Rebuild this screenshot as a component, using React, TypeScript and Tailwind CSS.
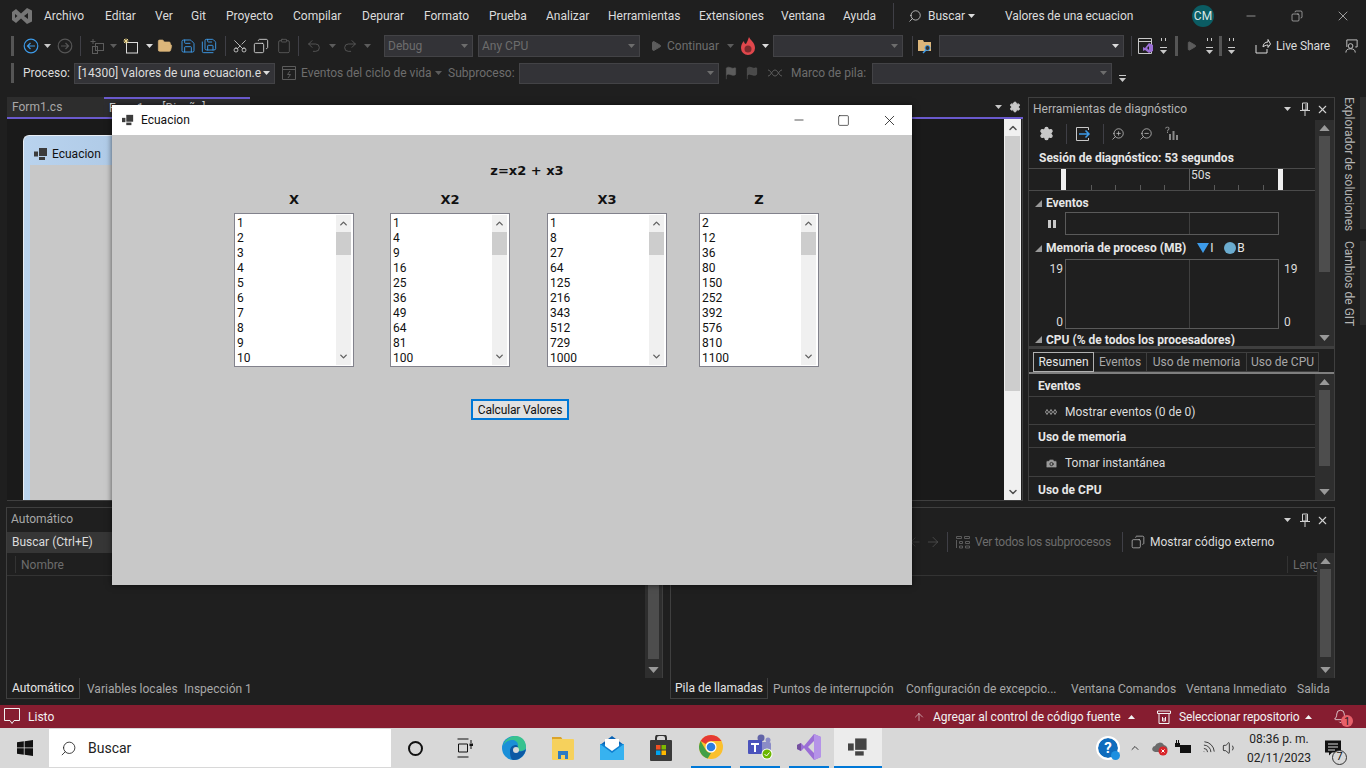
import React from "react";
import clsx from "clsx";
import {
  ArrowLeft,
  ArrowRight,
  ArrowUp,
  Bell,
  Camera,
  ChevronDown,
  ChevronUp,
  Clipboard,
  Copy,
  Flag,
  FolderOpen,
  Minus,
  Play,
  Redo2,
  Save,
  SaveAll,
  Scissors,
  Search,
  Settings,
  Square,
  Undo2,
  Volume1,
  Wifi,
  X,
  ZoomIn,
  ZoomOut,
} from "lucide-react";

const Caret = ({ className, up }: { className?: string; up?: boolean }) => (
  <svg width="7" height="4" viewBox="0 0 7 4" className={clsx("shrink-0 fill-current", className)}>
    <path d={up ? "M0 4 3.5 0 7 4Z" : "M0 0h7L3.5 4Z"} />
  </svg>
);

const Grip = ({ className }: { className?: string }) => (
  <div className={clsx("h-[20px] w-[3px] shrink-0 bg-[radial-gradient(#555_1px,transparent_1px)] bg-[length:2px_2px]", className)} />
);

const Sep = ({ className }: { className?: string }) => (
  <div className={clsx("h-[20px] w-px shrink-0 bg-[#3f3f46]", className)} />
);

const StepMark = ({ className }: { className?: string }) => (
  <svg width="8" height="18" viewBox="0 0 8 18" className={clsx("shrink-0", className)} fill="#c8c8c8">
    <rect x="1" y="1" width="1" height="3" />
    <rect x="5" y="1" width="1" height="3" />
    <rect x="0" y="10" width="7" height="1" />
    <path d="M0 13h7l-3.5 4Z" />
  </svg>
);

const Combo = ({ className, text, disabled }: { className: string; text?: string; disabled?: boolean }) => (
  <div
    className={clsx(
      "flex shrink-0 items-center justify-between border border-[#434346] bg-[#333337] pl-[3px] pr-[4px]",
      disabled ? "text-[#6d6d6d]" : "text-[#dcdcdc]",
      className,
    )}
  >
    <span>{text}</span>
    <Caret className={disabled ? "text-[#6d6d6d]" : "text-[#dcdcdc]"} />
  </div>
);

const AppGlyph = ({ className, fill = "#3c3c3c" }: { className?: string; fill?: string }) => (
  <svg viewBox="0 0 14 12" className={className} fill={fill}>
    <rect x="5" y="0" width="8" height="8" />
    <rect x="0" y="3.5" width="4" height="5" />
    <rect x="5" y="9" width="6" height="3" />
  </svg>
);

const VsLogo = ({ className }: { className?: string }) => (
  <svg viewBox="0 0 20 20" className={className} fill="#767676" fillRule="evenodd">
    <path d="M0 6 4 3l5 4.500L15 2l5 2.500v11L15 18l-6-5.500L4 17l-4-3ZM3 8v4l2.500-2ZM12 10l4 3V7Z" />
  </svg>
);

const menu = [
  ["Archivo", "w-[61px]"],
  ["Editar", "w-[50px]"],
  ["Ver", "w-[36px]"],
  ["Git", "w-[35px]"],
  ["Proyecto", "w-[67px]"],
  ["Compilar", "w-[69px]"],
  ["Depurar", "w-[62px]"],
  ["Formato", "w-[65px]"],
  ["Prueba", "w-[57px]"],
  ["Analizar", "w-[62px]"],
  ["Herramientas", "w-[91px]"],
  ["Extensiones", "w-[82px]"],
  ["Ventana", "w-[62px]"],
  ["Ayuda", "w-[50px]"],
];

const TitleBar = () => (
  <div className="flex h-[32px] items-center text-[#dcdcdc]">
    <VsLogo className="ml-[12px] mr-[12px] h-[20px] w-[20px] shrink-0" />
    {menu.map(([label, width]) => (
      <span key={label} className={clsx("shrink-0", width)}>
        {label}
      </span>
    ))}
    <div className="h-[26px] w-px shrink-0 bg-[#3f3f46]" />
    <Search className="ml-[14px] h-[14px] w-[14px] shrink-0 -scale-x-100" strokeWidth={1.3} />
    <span className="ml-[6px] w-[36px] shrink-0">Buscar</span>
    <Caret className="ml-[4px] mr-[30px]" />
    <span className="w-[187px] shrink-0 tracking-[-0.1px]">Valores de una ecuacion</span>
    <div className="flex h-[22px] w-[22px] shrink-0 items-center justify-center rounded-full bg-[#0b5c63] text-[12px] text-[#d8e6e6]">
      CM
    </div>
    <div className="ml-[14px] flex w-[46px] shrink-0 justify-center">
      <Minus className="h-[14px] w-[14px]" strokeWidth={1} />
    </div>
    <div className="flex w-[46px] shrink-0 justify-center">
      <Copy className="h-[12px] w-[12px] -scale-x-100" strokeWidth={1.2} />
    </div>
    <div className="flex w-[46px] shrink-0 justify-center">
      <X className="h-[16px] w-[16px]" strokeWidth={1} />
    </div>
  </div>
);

const ToolbarMain = () => (
  <div className="flex h-[28px] items-center">
    <Grip className="ml-[11px]" />
    <svg viewBox="0 0 16 16" className="ml-[9px] h-[16px] w-[16px] shrink-0" fill="none" stroke="#3d9be9" strokeWidth="1.2">
      <circle cx="8" cy="8" r="6.800" />
      <path d="M12 8H4.500M7.500 5 4.500 8l3 3" />
    </svg>
    <Caret className="ml-[5px] text-[#c8c8c8]" />
    <svg viewBox="0 0 16 16" className="ml-[6px] h-[16px] w-[16px] shrink-0" fill="none" stroke="#555" strokeWidth="1.2">
      <circle cx="8" cy="8" r="6.800" />
      <path d="M4 8h7.500M8.500 5l3 3-3 3" />
    </svg>
    <Sep className="ml-[7px]" />
    <svg viewBox="0 0 16 16" className="ml-[8px] h-[16px] w-[16px] shrink-0" fill="none" stroke="#5c5c5c">
      <rect x="6.500" y="5.500" width="8" height="7" />
      <rect x="3.500" y="8.500" width="5" height="7" />
      <path d="M4 1v5M1.500 3.500h5" />
    </svg>
    <Caret className="ml-[5px] text-[#5c5c5c]" />
    <svg viewBox="0 0 16 16" className="ml-[6px] h-[16px] w-[16px] shrink-0" fill="none" stroke="#dcdcdc">
      <rect x="3.500" y="4.500" width="11" height="10.500" />
      <path d="M3 .5v5M.5 3h5M1 1l4 4M5 1 1 5" stroke="#e8d28a" />
    </svg>
    <Caret className="ml-[7px] text-[#dcdcdc]" />
    <FolderOpen className="ml-[4px] h-[16px] w-[16px] shrink-0 fill-[#dcb67a] text-[#dcb67a]" strokeWidth={1} />
    <Save className="ml-[7px] h-[16px] w-[16px] shrink-0 text-[#3d9be9]" strokeWidth={1.4} />
    <SaveAll className="ml-[5px] h-[16px] w-[16px] shrink-0 text-[#3d9be9]" strokeWidth={1.4} />
    <Sep className="ml-[8px]" />
    <Scissors className="ml-[6px] h-[16px] w-[16px] shrink-0 -rotate-90 text-[#dcdcdc]" strokeWidth={1.2} />
    <Copy className="ml-[5px] h-[16px] w-[16px] shrink-0 -scale-x-100 text-[#dcdcdc]" strokeWidth={1.3} />
    <Clipboard className="ml-[7px] h-[16px] w-[16px] shrink-0 text-[#5c5c5c]" strokeWidth={1.3} />
    <Sep className="ml-[6px]" />
    <Undo2 className="ml-[7px] h-[16px] w-[16px] shrink-0 text-[#5c5c5c]" strokeWidth={1.3} />
    <Caret className="ml-[7px] text-[#5c5c5c]" />
    <Redo2 className="ml-[6px] h-[16px] w-[16px] shrink-0 text-[#5c5c5c]" strokeWidth={1.3} />
    <Caret className="ml-[6px] text-[#5c5c5c]" />
    <Combo className="ml-[13px] h-[22px] w-[89px]" text="Debug" disabled />
    <Combo className="ml-[5px] h-[22px] w-[162px]" text="Any CPU" disabled />
    <Play className="ml-[10px] h-[14px] w-[12px] shrink-0 fill-[#5c5c5c] text-[#5c5c5c]" />
    <span className="ml-[5px] w-[55px] shrink-0 text-[#6d6d6d]">Continuar</span>
    <Caret className="ml-[5px] text-[#5c5c5c]" />
    <svg viewBox="0 0 16 18" className="ml-[6px] h-[18px] w-[16px] shrink-0">
      <path d="M9 0c1 3 6 5 6 11a7 7 0 0 1-14 0c0-3 1-5 3-7 0 2 1 3 2 3 1-2 2-4 3-7Z" fill="#e0474c" />
      <circle cx="8" cy="12" r="3.500" fill="#7d2a2d" />
    </svg>
    <Caret className="ml-[6px] text-[#dcdcdc]" />
    <Combo className="ml-[4px] h-[22px] w-[130px]" disabled />
    <Sep className="ml-[9px]" />
    <svg viewBox="0 0 16 16" className="ml-[4px] h-[16px] w-[16px] shrink-0">
      <path d="M1 2h5l1 2h7v9H1Z" fill="#dcb67a" />
      <circle cx="10.500" cy="10" r="2.500" fill="#333" stroke="#3d9be9" />
      <path d="M9 12l-3 3" stroke="#3d9be9" strokeWidth="1.500" />
    </svg>
    <Combo className="ml-[6px] h-[22px] w-[185px]" />
    <Sep className="ml-[7px]" />
    <svg viewBox="0 0 16 16" className="ml-[6px] h-[16px] w-[16px] shrink-0" fill="none">
      <path d="M.5.5h13v15H.5ZM.5 3.500h13" stroke="#c8c8c8" />
      <path d="M11 5 15 7v6l-4 2-4-3-2 1V9l2 1ZM11 8l-2 2 2 2Z" fill="#9b6fd6" fillRule="evenodd" />
    </svg>
    <StepMark className="ml-[6px]" />
    <Grip className="ml-[7px]" />
    <Play className="ml-[8px] h-[14px] w-[11px] shrink-0 fill-[#5c5c5c] text-[#5c5c5c]" />
    <StepMark className="ml-[9px]" />
    <Grip className="ml-[5px]" />
    <StepMark className="ml-[6px]" />
    <svg viewBox="0 0 16 16" className="ml-[19px] h-[16px] w-[16px] shrink-0" fill="none" stroke="#dcdcdc">
      <path d="M1 7v8h11v-4M8 9c0-3 2-5 5-5V1.500L15.500 6 13 9.500V7c-2 0-4 1-5 2Z" />
    </svg>
    <span className="ml-[5px] w-[54px] shrink-0 tracking-[-0.1px] text-[#dcdcdc]">Live Share</span>
    <svg viewBox="0 0 16 16" className="ml-[14px] h-[16px] w-[15px] shrink-0" fill="none" stroke="#c8c8c8">
      <path d="M3 9V1.500h11V9h-2" />
      <circle cx="7" cy="8" r="2.500" />
      <path d="M2 15c0-3 2-4 5-4s5 1 5 4" />
    </svg>
  </div>
);

const ToolbarProcess = () => (
  <div className="flex h-[26px] items-center">
    <Grip className="ml-[11px]" />
    <span className="ml-[9px] w-[51px] shrink-0 text-[#dcdcdc]">Proceso:</span>
    <Combo className="h-[21px] w-[201px]" text="[14300] Valores de una ecuacion.e" />
    <svg viewBox="0 0 14 14" className="ml-[7px] h-[14px] w-[14px] shrink-0" fill="none" stroke="#5c5c5c">
      <path d="M.5.5h13v13H.5ZM.5 3.500h13M8 5 5.500 8.500h3L6 12" />
    </svg>
    <span className="ml-[5px] w-[130px] shrink-0 text-[#6d6d6d]">Eventos del ciclo de vida</span>
    <Caret className="ml-[4px] text-[#5c5c5c]" />
    <span className="ml-[6px] w-[65px] shrink-0 text-[#6d6d6d]">Subproceso:</span>
    <Combo className="ml-[6px] h-[21px] w-[200px]" disabled />
    <Flag className="ml-[5px] h-[14px] w-[14px] shrink-0 fill-[#5c5c5c] text-[#5c5c5c]" strokeWidth={1} />
    <Flag className="ml-[7px] h-[14px] w-[14px] shrink-0 fill-[#4a4a4a] text-[#5c5c5c]" strokeWidth={1} />
    <svg viewBox="0 0 14 14" className="ml-[9px] h-[14px] w-[14px] shrink-0" fill="none" stroke="#5c5c5c">
      <path d="M0 4c3 0 4 6 7 6s4-6 7-6M0 10c3 0 4-6 7-6s4 6 7 6" />
    </svg>
    <span className="ml-[9px] w-[75px] shrink-0 text-[#6d6d6d]">Marco de pila:</span>
    <Combo className="ml-[6px] h-[21px] w-[240px]" disabled />
    <div className="ml-[6px] mt-[10px] flex w-[8px] shrink-0 flex-col items-center gap-[2px] text-[#c8c8c8]">
      <div className="h-px w-[7px] bg-current" />
      <Caret />
    </div>
  </div>
);

const LightScrollbar = () => (
  <div className="flex w-[17px] shrink-0 flex-col bg-[#f0f0f0] text-[#505050]">
    <div className="flex h-[17px] items-center justify-center">
      <ChevronUp className="h-[12px] w-[12px]" strokeWidth={3} />
    </div>
    <div className="mx-px h-[255px] bg-[#cdcdcd]" />
    <div className="flex-1" />
    <div className="flex h-[17px] items-center justify-center">
      <ChevronDown className="h-[12px] w-[12px]" strokeWidth={3} />
    </div>
  </div>
);

const DarkScrollbar = ({ className, thumb }: { className: string; thumb: string }) => (
  <div className={clsx("flex shrink-0 flex-col items-center bg-[#2e2e2e] text-[#999]", className)}>
    <div className="flex h-[16px] items-center">
      <Caret up className="scale-150" />
    </div>
    <div className={clsx("w-[11px] bg-[#4d4d4d]", thumb)} />
    <div className="flex-1" />
    <div className="flex h-[16px] items-center">
      <Caret className="scale-150" />
    </div>
  </div>
);

const PanelButtons = () => (
  <div className="flex items-center text-[#d0d0d0]">
    <Caret />
    <svg viewBox="0 0 10 14" className="ml-[9px] h-[14px] w-[10px]" fill="none" stroke="currentColor">
      <path d="M2.500 1h5v7h-5ZM0 8.500h10M5 9v5M6 2v6" />
    </svg>
    <X className="ml-[6px] h-[13px] w-[13px]" strokeWidth={2} />
  </div>
);

const DocumentWell = () => (
  <div className="ml-[7px] flex h-[404px] w-[1016px] shrink-0 flex-col">
    <div className="flex h-[20px] items-stretch">
      <div className="flex w-[97px] items-center bg-[#2d2d2d] pl-[5px] text-[#a8a8a8]">Form1.cs</div>
      <div className="flex w-[146px] items-center border-t-2 border-[#6a5acd] bg-[#2d2d30] pl-[5px] text-[#dcdcdc]">
        Form1.cs [Diseño]
      </div>
      <div className="flex flex-1 items-center justify-end gap-[7px] pr-[2px] text-[#c8c8c8]">
        <Caret />
        <Settings className="h-[12px] w-[12px] fill-current" />
      </div>
    </div>
    <div className="h-[2px] bg-[#6a5acd]" />
    <div className="flex min-h-0 flex-1 border-b border-r border-[#3f3f3f]">
      <div className="min-w-0 flex-1 overflow-hidden bg-[#1a1a1a] pl-[16px] pt-[16px]">
        <div className="h-[400px] w-[400px] rounded-tl-[6px] border-l border-t border-[#e8eef5] bg-[linear-gradient(90deg,#b9d3ee,#8fadcf)]">
          <div className="flex h-[29px] items-center pl-[10px] pt-[6px] text-[#111]">
            <AppGlyph className="mr-[4px] h-[12px] w-[14px]" />
            Ecuacion
          </div>
          <div className="ml-[6px] h-full bg-[#c8c8c8]" />
        </div>
      </div>
      <LightScrollbar />
      <div className="w-px" />
    </div>
  </div>
);

const SectionHead = ({ children, className }: { children: React.ReactNode; className?: string }) => (
  <div className={clsx("flex items-center font-bold text-[#e6e6e6]", className)}>
    <svg width="7" height="7" viewBox="0 0 7 7" className="ml-[6px] mr-[4px] shrink-0 fill-[#999]">
      <path d="M7 0v7H0Z" />
    </svg>
    {children}
  </div>
);

const ChartBox = ({ className }: { className: string }) => (
  <div className={clsx("w-[214px] shrink-0 border border-[#5a5a5a]", className)}>
    <div className="h-full w-[124px] border-r border-[#3f3f3f]" />
  </div>
);

const SummaryRow = ({ icon, label, className }: { icon: React.ReactNode; label: string; className: string }) => (
  <div className={clsx("flex items-center border-b border-[#3f3f3f] pt-[2px] text-[#dcdcdc]", className)}>
    <div className="ml-[15px] mr-[7px] flex w-[14px] justify-center">{icon}</div>
    {label}
  </div>
);

const SummaryHead = ({ label, last }: { label: string; last?: boolean }) => (
  <div className={clsx("flex h-[23px] items-center pl-[9px] pt-[2px] font-bold text-[#e6e6e6]", !last && "border-b border-[#3f3f3f]")}>
    {label}
  </div>
);

const DiagnosticsPanel = () => (
  <div className="ml-[5px] flex h-[404px] w-[307px] shrink-0 flex-col border border-[#3f3f3f]">
    <div className="flex h-[22px] shrink-0 items-center justify-between pl-[4px] pr-[5px] text-[#b4b4b4]">
      Herramientas de diagnóstico
      <PanelButtons />
    </div>
    <div className="flex h-[226px] shrink-0">
      <div className="w-[286px] shrink-0">
        <div className="flex h-[27px] items-center text-[#c8c8c8]">
          <Settings className="ml-[10px] h-[15px] w-[15px] fill-[#c8c8c8]" />
          <Sep className="ml-[12px]" />
          <svg viewBox="0 0 16 16" className="ml-[8px] h-[16px] w-[16px]" fill="none" stroke="#c8c8c8">
            <path d="M13.500 4V1.500h-12v13h12V12" />
            <path d="M4 8h10M10.500 4.500 14 8l-3.500 3.500" stroke="#3d9be9" strokeWidth="1.500" />
          </svg>
          <Sep className="ml-[12px]" />
          <ZoomIn className="ml-[7px] h-[14px] w-[14px] -scale-x-100" strokeWidth={1.3} />
          <ZoomOut className="ml-[14px] h-[14px] w-[14px] -scale-x-100" strokeWidth={1.3} />
          <svg viewBox="0 0 14 16" className="ml-[12px] h-[16px] w-[14px]" fill="#8a8a8a">
            <rect x="4" y="8" width="2" height="6" />
            <rect x="7.500" y="5" width="2" height="9" />
            <rect x="11" y="9" width="2" height="5" />
            <path d="M0 2.500C.5 0 4.500 0 4.500 2.500 4.500 4 3 4 3 5.500H2C2 3.500 3.500 3.500 3.500 2.500 3.500 1.200 1.500 1.200 1 2.500ZM2 6h1v1H2Z" />
          </svg>
        </div>
        <div className="flex h-[21px] items-center pl-[10px] font-bold text-[#e6e6e6]">
          Sesión de diagnóstico: 53 segundos
        </div>
        <div className="flex h-[23px] items-start border-y border-[#4a4a4a]">
          <svg width="286" height="21" viewBox="0 0 286 21" className="shrink-0">
            <rect x="32" y="0" width="5" height="21" fill="#f0f0f0" />
            <rect x="249" y="0" width="5" height="21" fill="#f0f0f0" />
            <rect x="160" y="0" width="1" height="21" fill="#5a5a5a" />
            {[62, 86, 111, 135, 185, 209, 234].map((x) => (
              <rect key={x} x={x} y="16" width="1" height="5" fill="#5a5a5a" />
            ))}
            <text x="162" y="10" fill="#dcdcdc" fontSize="12">
              50s
            </text>
          </svg>
        </div>
        <SectionHead className="h-[21px] pt-[3px]">Eventos</SectionHead>
        <div className="flex h-[23px] items-center">
          <div className="ml-[19px] flex gap-[2px]">
            <div className="h-[8px] w-[3px] bg-[#c8c8c8]" />
            <div className="h-[8px] w-[3px] bg-[#c8c8c8]" />
          </div>
          <ChartBox className="ml-[9px] h-[23px]" />
        </div>
        <SectionHead className="h-[24px] pt-[2px]">
          Memoria de proceso (MB)
          <svg width="12" height="10" viewBox="0 0 12 10" className="ml-[11px] fill-[#3d9be9]">
            <path d="M0 0h12L6 10Z" />
          </svg>
          <span className="ml-px w-[6px] font-normal">I</span>
          <div className="ml-[8px] h-[12px] w-[12px] rounded-full bg-[#6baccf]" />
          <span className="ml-px w-[7px] font-normal">B</span>
        </SectionHead>
        <div className="flex h-[70px] text-[#dcdcdc]">
          <div className="-mb-[2px] flex w-[36px] shrink-0 flex-col items-end justify-between pr-[2px] pt-px">
            <span>19</span>
            <span>0</span>
          </div>
          <ChartBox className="h-[70px]" />
          <div className="-mb-[2px] flex flex-col justify-between pl-[5px] pt-px">
            <span>19</span>
            <span>0</span>
          </div>
        </div>
        <SectionHead className="h-[17px] pt-[4px]">CPU (% de todos los procesadores)</SectionHead>
      </div>
      <DarkScrollbar className="w-[19px]" thumb="h-[136px]" />
    </div>
    <div className="h-[3px] shrink-0 bg-[#3f3f3f]" />
    <div className="flex h-[23px] shrink-0 items-end pl-[4px] text-[#a8a8a8]">
      <div className="flex h-[20px] w-[61px] items-center justify-center border border-[#b0b0b0] text-[#e6e6e6]">Resumen</div>
      <div className="flex h-[20px] w-[53px] items-center justify-center border-y border-r border-[#3f3f3f]">Eventos</div>
      <div className="flex h-[20px] w-[100px] items-center justify-center border-y border-r border-[#3f3f3f]">Uso de memoria</div>
      <div className="flex h-[20px] w-[72px] items-center justify-center border-y border-r border-[#3f3f3f]">Uso de CPU</div>
    </div>
    <div className="h-[2px] shrink-0 bg-[#7f7f7f]" />
    <div className="flex min-h-0 flex-1">
      <div className="w-[286px] shrink-0">
        <SummaryHead label="Eventos" />
        <SummaryRow
          className="h-[28px]"
          label="Mostrar eventos (0 de 0)"
          icon={
            <svg viewBox="0 0 12 6" className="h-[6px] w-[12px]" fill="none" stroke="#9a9a9a">
              <path d="M2 .5 .5 3 2 5.500 3.500 3ZM6 .5 4.500 3 6 5.500 7.500 3ZM10 .5 8.500 3 10 5.500 11.500 3Z" />
            </svg>
          }
        />
        <SummaryHead label="Uso de memoria" />
        <SummaryRow
          className="h-[29px]"
          label="Tomar instantánea"
          icon={<Camera className="h-[13px] w-[13px] fill-[#9a9a9a] text-[#1f1f1f]" strokeWidth={1.5} />}
        />
        <SummaryHead label="Uso de CPU" last />
      </div>
      <DarkScrollbar className="w-[19px]" thumb="h-[76px]" />
    </div>
  </div>
);

const BottomTab = ({ label, className }: { label: string; className?: string }) => (
  <span className={clsx("shrink-0 text-[#a8a8a8]", className)}>{label}</span>
);

const AutosPanel = () => (
  <div className="ml-[6px] flex h-[192px] w-[657px] shrink-0 flex-col">
    <div className="flex min-h-0 flex-1 flex-col border-x border-t border-[#3f3f3f]">
      <div className="flex h-[24px] shrink-0 items-center pb-[2px] pl-[4px] text-[#a8a8a8]">Automático</div>
      <div className="flex h-[21px] shrink-0 items-center bg-[#363636] pb-[2px] pl-[5px] text-[#dcdcdc]">Buscar (Ctrl+E)</div>
      <div className="flex min-h-0 flex-1">
        <div className="flex-1">
          <div className="mt-[3px] flex h-[20px] items-center border-b border-[#333] pb-[2px] text-[#6d6d6d]">
            <div className="ml-[8px] h-full w-px bg-[#333]" />
            <span className="ml-[5px]">Nombre</span>
          </div>
        </div>
        <DarkScrollbar className="w-[17px]" thumb="h-[90px]" />
      </div>
    </div>
    <div className="flex h-[21px] shrink-0 items-center">
      <div className="flex h-[21px] w-[74px] items-center justify-center border border-t-0 border-[#3f3f3f] text-[#e6e6e6]">Automático</div>
      <BottomTab label="Variables locales" className="ml-[7px] w-[97px]" />
      <BottomTab label="Inspección 1" />
    </div>
  </div>
);

const StackPanel = () => (
  <div className="ml-[7px] flex h-[192px] w-[665px] shrink-0 flex-col">
    <div className="flex min-h-0 flex-1 flex-col border-x border-t border-[#3f3f3f]">
      <div className="flex h-[24px] shrink-0 items-center justify-end pr-[5px]">
        <PanelButtons />
      </div>
      <div className="flex h-[21px] shrink-0 items-center justify-end pb-px text-[#6d6d6d]">
        <ArrowLeft className="h-[14px] w-[14px] text-[#4a4a4a]" strokeWidth={1} />
        <ArrowRight className="ml-[3px] h-[16px] w-[16px] text-[#5c5c5c]" strokeWidth={1} />
        <Sep className="ml-[6px]" />
        <svg viewBox="0 0 14 14" className="ml-[8px] h-[14px] w-[14px]" fill="none" stroke="#5c5c5c">
          <path d="M.5 1.500h5v2h-5ZM8.500 1.500h5v2h-5ZM3.500 6.500h3v2h-3ZM9.500 6.500h4v2h-4ZM3.500 11h3v2h-3ZM9.500 11h4v2h-4ZM.5 5v8" />
        </svg>
        <span className="ml-[5px] w-[147px] tracking-[-0.25px]">Ver todos los subprocesos</span>
        <Sep />
        <Copy className="ml-[8px] h-[14px] w-[14px] -scale-x-100 text-[#c8c8c8]" strokeWidth={1.2} />
        <span className="ml-[5px] w-[184px] text-[#dcdcdc]">Mostrar código externo</span>
      </div>
      <div className="flex min-h-0 flex-1">
        <div className="flex-1">
          <div className="mt-[3px] flex h-[20px] items-center justify-end border-b border-[#333] pb-[2px] text-[#6d6d6d]">
            <div className="h-full w-px bg-[#333]" />
            <span className="ml-[5px] w-[24px]">Leng</span>
          </div>
        </div>
        <DarkScrollbar className="w-[17px]" thumb="h-[88px]" />
      </div>
    </div>
    <div className="flex h-[21px] shrink-0 items-center">
      <div className="flex h-[21px] w-[98px] items-center justify-center border border-t-0 border-[#3f3f3f] text-[#e6e6e6]">Pila de llamadas</div>
      <BottomTab label="Puntos de interrupción" className="ml-[5px] w-[133px]" />
      <BottomTab label="Configuración de excepcio..." className="w-[165px]" />
      <BottomTab label="Ventana Comandos" className="w-[115px]" />
      <BottomTab label="Ventana Inmediato" className="w-[111px]" />
      <BottomTab label="Salida" />
    </div>
  </div>
);

const SideTabs = () => (
  <div className="flex w-[26px] shrink-0 flex-col pt-[11px] text-[#b4b4b4]">
    <div className="flex h-[132px] justify-between">
      <span className="[writing-mode:vertical-rl]">Explorador de soluciones</span>
      <div className="w-[6px] bg-[#2d2d2d]" />
    </div>
    <div className="mt-[12px] flex h-[84px] justify-between">
      <span className="[writing-mode:vertical-rl]">Cambios de GIT</span>
      <div className="w-[6px] bg-[#2d2d2d]" />
    </div>
  </div>
);

const ListBox = ({ items }: { items: number[] }) => (
  <div className="flex h-[154px] w-[120px] shrink-0 border border-[#82828c] bg-white p-px">
    <div className="flex-1 pl-px pt-px text-[#111]">
      {items.map((n, i) => (
        <div key={i} className="h-[15px] leading-[15px]">
          {n}
        </div>
      ))}
    </div>
    <div className="mr-px flex w-[15px] flex-col bg-[#f0f0f0] text-[#606060]">
      <div className="flex h-[17px] items-center justify-center">
        <ChevronUp className="h-[11px] w-[11px]" strokeWidth={3} />
      </div>
      <div className="h-[23px] bg-[#cdcdcd]" />
      <div className="flex-1" />
      <div className="flex h-[17px] items-center justify-center">
        <ChevronDown className="h-[11px] w-[11px]" strokeWidth={3} />
      </div>
    </div>
  </div>
);

const columns = [
  { title: "X", items: [1, 2, 3, 4, 5, 6, 7, 8, 9, 10], cls: "" },
  { title: "X2", items: [1, 4, 9, 16, 25, 36, 49, 64, 81, 100], cls: "ml-[36px]" },
  { title: "X3", items: [1, 8, 27, 64, 125, 216, 343, 512, 729, 1000], cls: "ml-[37px]" },
  { title: "Z", items: [2, 12, 36, 80, 150, 252, 392, 576, 810, 1100], cls: "ml-[32px]" },
];

const EcuacionWindow = () => (
  <div className="absolute left-[112px] top-[105px] flex h-[480px] w-[800px] flex-col bg-[#c8c8c8] shadow-[0_0_6px_rgba(0,0,0,0.6)]">
    <div className="flex h-[30px] shrink-0 items-center bg-white text-[#111]">
      <AppGlyph className="ml-[10px] mr-[7px] h-[12px] w-[12px]" />
      Ecuacion
      <div className="ml-auto flex items-center">
        <div className="flex w-[45px] justify-center">
          <Minus className="h-[14px] w-[14px]" strokeWidth={1.2} />
        </div>
        <div className="flex w-[45px] justify-center">
          <Square className="h-[13px] w-[13px]" strokeWidth={1.2} />
        </div>
        <div className="flex w-[46px] justify-center">
          <X className="h-[17px] w-[17px]" strokeWidth={1.1} />
        </div>
      </div>
    </div>
    <div className="flex h-[49px] shrink-0 items-end justify-center pb-[4px] pl-[30px] text-[13px] font-bold text-[#111] [font-family:'DejaVu_Sans',sans-serif]">
      z=x2 + x3
    </div>
    <div className="flex shrink-0 pl-[122px]">
      {columns.map((col) => (
        <div key={col.title} className={col.cls}>
          <div className="flex h-[29px] items-center justify-center pt-[3px] text-[13px] font-bold text-[#111] [font-family:'DejaVu_Sans',sans-serif]">
            {col.title}
          </div>
          <ListBox items={col.items} />
        </div>
      ))}
    </div>
    <div className="mt-[32px] flex pl-[359px]">
      <div className="flex h-[21px] w-[98px] items-center justify-center border-2 border-[#0078d7] bg-[#e1e1e1] tracking-[-0.15px] text-[#111]">
        Calcular Valores
      </div>
    </div>
  </div>
);

const StatusBar = () => (
  <div className="flex h-[23px] shrink-0 items-center bg-[#861d30] text-[#f2f2f2]">
    <svg viewBox="0 0 16 17" className="ml-[4px] h-[17px] w-[16px] shrink-0" fill="none" stroke="#f2f2f2">
      <path d="M.5.5h15v12H10l-2 3-2-3H.5Z" />
    </svg>
    <span className="ml-[8px] w-[40px] shrink-0">Listo</span>
    <ArrowUp className="ml-[845px] h-[14px] w-[12px] shrink-0" strokeWidth={1.2} />
    <span className="ml-[8px] w-[189px] shrink-0">Agregar al control de código fuente</span>
    <Caret up className="ml-[6px]" />
    <svg viewBox="0 0 14 14" className="ml-[22px] h-[14px] w-[14px] shrink-0" fill="none" stroke="#f2f2f2">
      <path d="M.5 1h13v2.500H.5ZM2 3.500v10h10v-10M5.500 7v4h3V7M5.500 9h3" />
    </svg>
    <span className="ml-[8px] w-[120px] shrink-0 tracking-[-0.1px]">Seleccionar repositorio</span>
    <Caret up className="ml-[6px]" />
    <div className="relative ml-[21px] shrink-0">
      <Bell className="h-[15px] w-[15px]" strokeWidth={1.2} />
      <div className="absolute -bottom-[3px] -right-[5px] flex h-[12px] w-[12px] items-center justify-center rounded-full bg-[#e8606a] text-[10px] text-[#1a1a1a]">
        1
      </div>
    </div>
  </div>
);

const Edge = () => (
  <svg viewBox="0 0 24 24" className="h-[24px] w-[24px]">
    <circle cx="12" cy="12" r="12" fill="#1b8fd8" />
    <path d="M1 10C3 2 10 0 14 0c6 0 10 5 10 11 0 3-3 4-6 4-3 0-4-1-4-2 0-2 2-2 2-4 0-3-3-5-6-5-4 0-8 3-9 6Z" fill="#37c28f" />
    <path d="M8 15c0-4 3-6 6-6 1 0 2 1 2 2-2 1-2 3 0 4 3 1 6 0 8-2-1 6-6 11-12 11-2 0-4-1-4-9Z" fill="#0c59a4" />
    <circle cx="14" cy="14" r="3" fill="#d8d8d8" />
  </svg>
);

const Explorer = () => (
  <svg viewBox="0 0 22 24" className="h-[24px] w-[22px]">
    <path d="M0 1h9l2 3H0Z" fill="#dba32a" />
    <rect y="3" width="22" height="21" rx="1" fill="#f6d15c" />
    <path d="M6 23v-8h10v8h-3v-4H9v4Z" fill="#2b7bc4" />
  </svg>
);

const Mail = () => (
  <svg viewBox="0 0 24 24" className="h-[24px] w-[24px]">
    <path d="M12 0 24 9H0Z" fill="#0a63b5" />
    <rect y="8" width="24" height="16" fill="#37b2f0" />
    <path d="M0 8 12 17 24 8Z" fill="#0f7fd0" />
    <path d="M5 3h14v7l-7 5-7-5Z" fill="#fff" />
  </svg>
);

const Store = () => (
  <svg viewBox="0 0 22 26" className="h-[26px] w-[22px]">
    <path d="M6 6V3a3 3 0 0 1 3-3h4a3 3 0 0 1 3 3v3" fill="none" stroke="#333" strokeWidth="2" />
    <rect y="5" width="22" height="21" rx="1" fill="#3a3a3a" />
    <rect x="6" y="10" width="4.500" height="4.500" fill="#f25022" />
    <rect x="11.500" y="10" width="4.500" height="4.500" fill="#7fba00" />
    <rect x="6" y="15.500" width="4.500" height="4.500" fill="#00a4ef" />
    <rect x="11.500" y="15.500" width="4.500" height="4.500" fill="#ffb900" />
  </svg>
);

const Chrome = () => (
  <svg viewBox="0 0 24 24" className="h-[24px] w-[24px]">
    <circle cx="12" cy="12" r="12" fill="#fbc02d" />
    <path d="M12 0a12 12 0 0 1 10.400 6H12a6 6 0 0 0-5.200 3L1.600 6A12 12 0 0 1 12 0Z" fill="#e53935" />
    <path d="M1.600 6 6.800 15a6 6 0 0 0 5.200 3l-3.300 5.500A12 12 0 0 1 1.600 6Z" fill="#43a047" />
    <circle cx="12" cy="12" r="5.500" fill="#fff" />
    <circle cx="12" cy="12" r="4.300" fill="#2d7de0" />
  </svg>
);

const Teams = () => (
  <svg viewBox="0 0 26 26" className="h-[26px] w-[26px]">
    <circle cx="14" cy="4" r="3.500" fill="#6264a7" />
    <circle cx="21" cy="6" r="2.500" fill="#8b8cc7" />
    <rect x="13" y="8" width="11" height="12" rx="2" fill="#8b8cc7" />
    <rect x="1" y="6" width="14" height="14" rx="1" fill="#4b53bc" />
    <path d="M4 9h8v2H9v7H7v-7H4Z" fill="#fff" />
    <circle cx="20" cy="20" r="5.500" fill="#fff" />
    <circle cx="20" cy="20" r="4.500" fill="#6bb700" />
    <path d="m17.500 20 2 2 3-3.500" fill="none" stroke="#fff" />
  </svg>
);

const VsPurple = () => (
  <svg viewBox="0 0 24 26" className="h-[26px] w-[24px]" fillRule="evenodd">
    <path d="M17 0 24 3v20l-7 3L7 14l-3 3-4-2V11l4-2 3 3Z" fill="#9b6fd6" />
    <path d="M17 7l-6 6 6 6Z" fill="#d8d8d8" />
    <path d="M17 0 24 3v20l-7 3Z" fill="#b593e8" />
    <path d="M0 11l4-2v8l-4-2Z" fill="#75519f" />
  </svg>
);

const TaskApp = ({ children, className, active }: { children: React.ReactNode; className: string; active?: boolean }) => (
  <div className={clsx("flex h-full shrink-0 flex-col", active && "bg-[#ececec]", className)}>
    <div className="flex flex-1 items-center justify-center">{children}</div>
    <div className={clsx("h-[2px] bg-[#0078d7]", !active && "mx-[4px]")} />
  </div>
);

const TaskSlot = ({ children, className }: { children: React.ReactNode; className: string }) => (
  <div className={clsx("flex h-full shrink-0 items-center justify-center", className)}>{children}</div>
);

const Taskbar = () => (
  <div className="flex h-[40px] shrink-0 items-center bg-[#d8d8d8] text-[#111]">
    <TaskSlot className="w-[49px]">
      <svg viewBox="0 0 16 16" className="h-[16px] w-[16px]" fill="#111">
        <path d="M0 2.300 6.800 1.300V7.500H0ZM7.600 1.200 16 0V7.500H7.600ZM0 8.300H6.800V14.700L0 13.700ZM7.600 8.300H16V16L7.600 14.800Z" />
      </svg>
    </TaskSlot>
    <div className="flex h-[38px] w-[342px] shrink-0 items-center bg-white pl-[11px] text-[14px] text-[#222]">
      <Search className="h-[17px] w-[17px] -scale-x-100" strokeWidth={1.2} />
      <span className="ml-[11px]">Buscar</span>
    </div>
    <TaskSlot className="w-[49px]">
      <div className="h-[15px] w-[15px] rounded-full border-[2.5px] border-[#111]" />
    </TaskSlot>
    <TaskSlot className="w-[49px]">
      <svg viewBox="0 0 16 20" className="h-[20px] w-[16px]" fill="none" stroke="#111">
        <path d="M.5 1h11M.5 19h11M1.500 6h9v8h-9ZM14 2v3M14 8v3" />
        <rect x="13" y="6" width="3" height="1.500" fill="#111" />
      </svg>
    </TaskSlot>
    <TaskSlot className="w-[49px]">
      <Edge />
    </TaskSlot>
    <TaskSlot className="w-[49px]">
      <Explorer />
    </TaskSlot>
    <TaskSlot className="w-[50px]">
      <Mail />
    </TaskSlot>
    <TaskSlot className="w-[48px]">
      <Store />
    </TaskSlot>
    <TaskApp className="ml-[2px] w-[48px]">
      <Chrome />
    </TaskApp>
    <TaskApp className="ml-px w-[48px]">
      <Teams />
    </TaskApp>
    <TaskApp className="ml-px w-[48px]">
      <VsPurple />
    </TaskApp>
    <TaskApp className="ml-px w-[48px]" active>
      <AppGlyph className="h-[20px] w-[20px]" fill="#444" />
    </TaskApp>
    <div className="relative ml-[216px] flex h-[20px] w-[20px] shrink-0 items-center justify-center rounded-full bg-[#0f6cbd] text-[15px] font-bold text-white outline-2 outline-white">
      ?
      <div className="absolute -bottom-[2px] -right-[2px] h-[9px] w-[9px] rounded-full bg-[#1d8fe0]" />
    </div>
    <ChevronUp className="ml-[11px] h-[14px] w-[12px] shrink-0" strokeWidth={1.6} />
    <svg viewBox="0 0 16 16" className="ml-[11px] h-[16px] w-[16px] shrink-0">
      <path d="M1 11a3 3 0 0 1 2-5 5 5 0 0 1 9-1 4 4 0 0 1 2 7H3Z" fill="#6b6b6b" />
      <circle cx="11" cy="11" r="4.500" fill="#d9252a" />
      <path d="m9.500 9.500 3 3M12.500 9.500l-3 3" stroke="#fff" />
    </svg>
    <svg viewBox="0 0 16 16" className="ml-[7px] h-[16px] w-[16px] shrink-0" fill="#111">
      <rect x="5" y="5" width="11" height="8" />
      <rect x="0" y="3" width="5" height="4" />
      <rect x="1" y="0" width="1" height="3" />
      <rect x="3" y="0" width="1" height="3" />
    </svg>
    <Wifi className="ml-[9px] h-[16px] w-[16px] shrink-0 rotate-45 text-[#333]" strokeWidth={1.3} />
    <Volume1 className="ml-[6px] h-[16px] w-[16px] shrink-0" strokeWidth={1.2} />
    <div className="ml-[11px] flex w-[60px] shrink-0 flex-col items-center gap-[3px] text-[12px] leading-[16px] text-[#222]">
      <span>08:36 p. m.</span>
      <span>02/11/2023</span>
    </div>
    <div className="relative ml-[16px] shrink-0">
      <svg viewBox="0 0 16 16" className="h-[17px] w-[16px]" fill="#111">
        <path d="M0 0h16v12H7l-3 3v-3H0ZM3 3v1h10V3Zm0 3v1h10V6Zm0 3v1h7V9Z" fillRule="evenodd" />
      </svg>
      <div className="absolute -bottom-[8px] -right-[6px] flex h-[15px] w-[15px] items-center justify-center rounded-full border border-[#333] bg-[#d8d8d8] text-[11px]">
        7
      </div>
    </div>
  </div>
);

export default function App() {
  return (
    <div className="relative flex h-[768px] w-[1366px] flex-col overflow-hidden whitespace-nowrap bg-[#1f1f1f] text-[12px] [font-family:Roboto,sans-serif]">
      <TitleBar />
      <ToolbarMain />
      <ToolbarProcess />
      <div className="flex min-h-0 flex-1">
        <div className="w-[1340px] shrink-0 pt-[11px]">
          <div className="flex">
            <DocumentWell />
            <DiagnosticsPanel />
          </div>
          <div className="mt-[6px] flex">
            <AutosPanel />
            <StackPanel />
          </div>
        </div>
        <SideTabs />
      </div>
      <StatusBar />
      <Taskbar />
      <EcuacionWindow />
    </div>
  );
}
